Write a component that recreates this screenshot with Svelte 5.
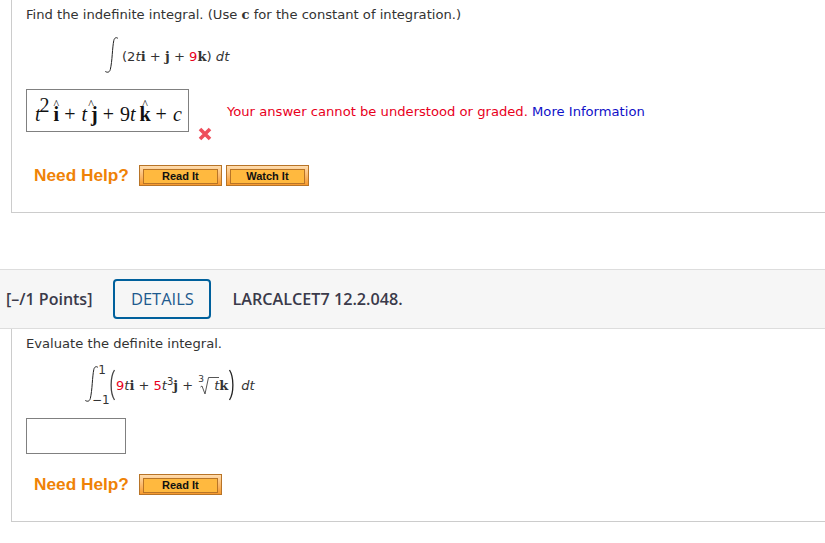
<script>
  const problems = ["Read It", "Watch It"];
</script>

<div class="page">
  <section class="card first">
    <p class="prompt">Find the indefinite integral. (Use <b class="serif">c</b> for the constant of integration.)</p>
    <div class="formula one">
      <svg class="int" width="16" height="40" viewBox="0 0 16 40">
        <path d="M15 2.500c-1.500-1.500-3.500-1-4.200 2-1.500 7-1.500 21-3.500 29-.6 2.500-2.500 3.500-5 2" fill="none" stroke="#222" stroke-width="1" />
      </svg>
      <span class="expr">(2<i>t</i><b class="serif">i</b> + <b class="serif">j</b> + <span class="red">9</span><b class="serif">k</b>) <i>dt</i></span>
    </div>
    <div class="answer-row">
      <div class="mathbox">
        <span class="mi">t</span><sup>2</sup><span class="hat">i</span><span class="op">+</span><span class="mi">t</span><span class="hat jhat">j</span><span class="op">+</span><span class="num">9</span><span class="mi">t</span><span class="hat">k</span><span class="op">+</span><span class="mi">c</span>
      </div>
      <svg class="cross" width="14" height="14" viewBox="0 0 14 14">
        <path d="M2 2l10 10M12 2l-10 10" stroke="#ee4f5c" stroke-width="3.600" />
      </svg>
      <p class="feedback"><span class="red">Your answer cannot be understood or graded.</span> <a href="#more">More Information</a></p>
    </div>
    <div class="help">
      <span class="need">Need Help?</span>
      {#each problems as label}
        <button><span>{label}</span></button>
      {/each}
    </div>
  </section>

  <header class="bar">
    <span class="points">[–/1 Points]</span>
    <span class="details">DETAILS</span>
    <span class="code">LARCALCET7 12.2.048.</span>
  </header>

  <section class="card second">
    <p class="prompt">Evaluate the definite integral.</p>
    <div class="formula two">
      <svg class="int" width="16" height="40" viewBox="0 0 16 40">
        <path d="M15 2.500c-1.500-1.500-3.500-1-4.200 2-1.500 7-1.500 21-3.500 29-.6 2.500-2.500 3.500-5 2" fill="none" stroke="#222" stroke-width="1" />
      </svg>
      <span class="limits"><span>1</span><span>−1</span></span>
      <svg class="paren" width="8" height="32" viewBox="0 0 8 32"><path d="M6.500 1C2 8 2 24 6.500 31" fill="none" stroke="#444" stroke-width="1.300" /></svg>
      <span class="expr"><span class="red">9</span><i>t</i><b class="serif">i</b> + <span class="red">5</span><i>t</i><sup>3</sup><b class="serif">j</b> + <span class="root"><sup>3</sup><svg width="19" height="19" viewBox="0 0 19 19"><path d="M0.500 11l1.500-1 3 8 3.500-16.500h10.500" fill="none" stroke="#555" stroke-width="1" /></svg><i>t</i></span><b class="serif">k</b></span>
      <svg class="paren" width="8" height="32" viewBox="0 0 8 32"><path d="M1.500 1C6 8 6 24 1.500 31" fill="none" stroke="#222" stroke-width="1.300" /></svg>
      <span class="expr dt"><i>dt</i></span>
    </div>
    <div class="emptybox"></div>
    <div class="help">
      <span class="need">Need Help?</span>
      <button><span>Read It</span></button>
    </div>
  </section>
</div>

<style>
  :global(body) {
    margin: 0;
    background: #fff;
  }

  .page {
    width: 825px;
    height: 543px;
    overflow: hidden;
    font-family: "DejaVu Sans", Verdana, sans-serif;
    font-size: 13.130px;
    color: #333;
  }

  .card {
    margin-left: 11px;
    padding-left: 14px;
    border-left: 1px solid #ccc;
    border-bottom: 1px solid #ccc;
    box-sizing: border-box;
    padding-top: 7px;
  }

  .first {
    height: 213px;
  }

  .second {
    height: 193px;
  }

  .prompt {
    margin: 0;
    line-height: 16px;
  }

  .serif {
    font-family: "DejaVu Serif", serif;
    font-weight: bold;
  }

  .red {
    color: #e8001c;
  }

  .formula {
    display: flex;
    align-items: center;
  }

  .one {
    margin: 12px 0 0 77px;
    height: 42px;
  }

  .expr {
    white-space: pre;
  }

  .one .expr {
    margin-left: 3px;
  }

  .two {
    margin: 10px 0 0 57px;
    height: 46px;
  }

  .limits {
    display: flex;
    flex-direction: column;
    justify-content: space-between;
    text-align: right;
    height: 42px;
    width: 14px;
    font-size: 12px;
    line-height: 12px;
    margin-left: -7px;
    margin-right: 2px;
  }

  .two .expr {
    font-size: 13px;
  }

  .two .dt {
    margin-left: 5px;
  }

  sup {
    font-size: 10px;
    line-height: 0;
  }

  .root {
    position: relative;
    display: inline-block;
    padding-left: 16px;
    margin-left: 1px;
  }

  .root sup {
    position: absolute;
    left: 0;
    top: 1px;
    font-size: 9px;
  }

  .root svg {
    position: absolute;
    left: 2px;
    top: -2px;
  }

  .answer-row {
    display: flex;
    margin-top: 12px;
    height: 76px;
  }

  .mathbox {
    box-sizing: border-box;
    width: 163px;
    height: 43px;
    border: 1px solid #808080;
    padding: 12px 0 0 8px;
    white-space: nowrap;
    font-family: "Liberation Serif", serif;
    font-size: 20px;
    line-height: 24px;
    color: #111;
    display: flex;
    align-items: baseline;
  }

  .mathbox .mi {
    font-style: italic;
  }

  .mathbox sup {
    font-size: 20px;
    position: relative;
    top: -9px;
    margin-left: -1px;
  }

  .hat {
    position: relative;
    font-weight: bold;
    margin-left: 4px;
  }

  .hat::before {
    content: "^";
    position: absolute;
    left: 50%;
    transform: translateX(-50%);
    top: -10px;
    font-weight: normal;
    font-size: 12px;
  }

  .jhat::before {
    left: 0;
  }

  .op {
    margin: 0 6px 0 5px;
  }

  .cross {
    margin: 38px 0 0 9px;
    flex: none;
  }

  .feedback {
    margin: 14px 0 0 15px;
    line-height: 18px;
    white-space: nowrap;
  }

  a {
    color: #1010c8;
    text-decoration: none;
  }

  .help {
    display: flex;
    align-items: center;
    gap: 4px;
    margin-left: 8px;
    height: 21px;
  }

  .need {
    font-family: "Liberation Sans", Arial, sans-serif;
    font-size: 17.250px;
    font-weight: bold;
    color: #ef8206;
    margin-right: 6px;
  }

  button {
    box-sizing: border-box;
    width: 83px;
    height: 21px;
    padding: 3px;
    border: 1px solid #b87427;
    background: linear-gradient(#ffdcae, #f79a2e);
    font-family: "Liberation Sans", Arial, sans-serif;
    font-size: 11px;
    font-weight: bold;
    color: #111;
  }

  button span {
    display: block;
    height: 13px;
    line-height: 13px;
    border: 1px solid #b87427;
    background: #ffb93f;
  }

  .bar {
    box-sizing: border-box;
    display: flex;
    align-items: center;
    height: 60px;
    margin-top: 56px;
    background: #f6f6f6;
    border-top: 1px solid #ddd;
    border-bottom: 1px solid #ddd;
    padding-left: 6px;
    font-family: "Open Sans", sans-serif;
    font-size: 16px;
    color: #3a3a4a;
  }

  .points {
    font-weight: 600;
    font-size: 16px;
  }

  .details {
    box-sizing: border-box;
    width: 98px;
    height: 40px;
    line-height: 36px;
    margin-left: 21px;
    border: 2px solid #00609c;
    border-radius: 4px;
    text-align: center;
    font-size: 16.500px;
    color: #1e5a8e;
  }

  .code {
    font-weight: 600;
    font-size: 16.200px;
    margin-left: 21px;
  }

  .emptybox {
    box-sizing: border-box;
    width: 100px;
    height: 36px;
    margin-top: 10px;
    border: 1px solid #808080;
  }

  .second .help {
    margin-top: 20px;
  }
</style>
